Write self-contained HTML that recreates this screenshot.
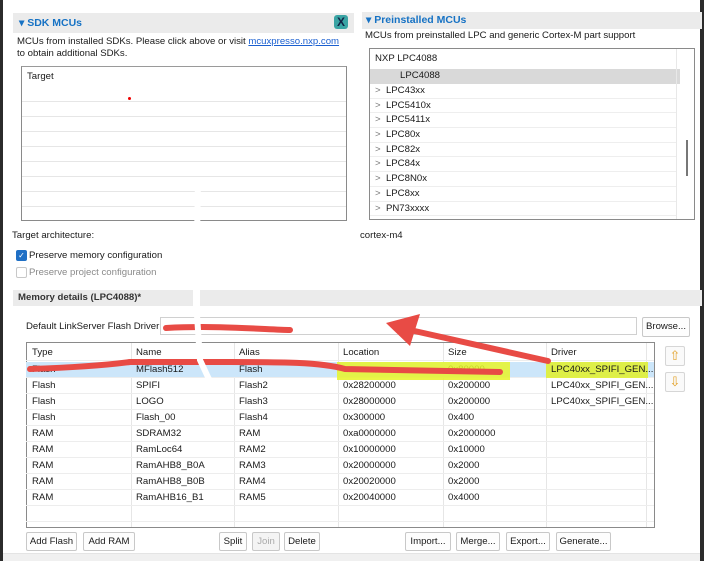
<!DOCTYPE html>
<html><head><style>
*{margin:0;padding:0;box-sizing:border-box}
body{width:704px;height:561px;overflow:hidden;background:#fff;font-family:"Liberation Sans",sans-serif;font-size:9.6px;color:#1a1a1a;position:relative}
.a{position:absolute;white-space:nowrap}
.hdr{position:absolute;background:#ebebeb;color:#1672c4;font-weight:bold;font-size:10.5px}
.row{position:absolute;left:0;right:0;border-bottom:1px solid #e6e6e6}
.btn{position:absolute;top:532px;height:19px;border:1px solid #c8c8c8;border-radius:2px;background:#fdfdfd;font-size:9.6px;text-align:center;line-height:17px}
.tr{position:absolute;left:26px;width:628px;height:16px;border-bottom:1px solid #ededed}
.tr span{position:absolute;top:2px}
</style></head><body>
<div class="a" style="left:0;top:0;width:3px;height:561px;background:#2b2b2b"></div>
<div class="a" style="left:700px;top:0;width:4px;height:561px;background:#2b2b2b"></div>
<div class="a" style="left:3px;top:553px;width:697px;height:8px;background:#f0f0f0;border-top:1px solid #e4e4e4"></div>

<!-- SDK MCUs -->
<div class="hdr" style="left:13px;top:13px;width:341px;height:20px;line-height:20px;padding-left:6px">&#9662; SDK MCUs</div>
<div class="a" style="left:334px;top:15px;width:14px;height:14px;background:#3aa4a4;border-radius:3px;color:#124;font-weight:bold;font-size:12px;text-align:center;line-height:14px">X</div>
<div class="a" style="left:17px;top:36px">MCUs from installed SDKs. Please click above or visit <span style="color:#1a5fd0;text-decoration:underline">mcuxpresso.nxp.com</span></div>
<div class="a" style="left:17px;top:48px">to obtain additional SDKs.</div>
<div class="a" style="left:21px;top:66px;width:326px;height:155px;border:1px solid #8a8a8a;border-top-color:#9a9a9a">
 <div class="a" style="left:5px;top:4px">Target</div>
 <div class="a" style="left:106px;top:30px;width:3px;height:3px;background:#e00;border-radius:50%"></div>
 <div class="row" style="top:0;height:35px"></div>
 <div class="row" style="top:35px;height:15px"></div>
 <div class="row" style="top:50px;height:15px"></div>
 <div class="row" style="top:65px;height:15px"></div>
 <div class="row" style="top:80px;height:15px"></div>
 <div class="row" style="top:95px;height:15px"></div>
 <div class="row" style="top:110px;height:15px"></div>
 <div class="row" style="top:125px;height:15px"></div>
</div>

<!-- Preinstalled -->
<div class="hdr" style="left:362px;top:12px;width:340px;height:17px;line-height:17px;padding-left:4px">&#9662; Preinstalled MCUs</div>
<div class="a" style="left:365px;top:30px">MCUs from preinstalled LPC and generic Cortex-M part support</div>
<div class="a" style="left:369px;top:48px;width:326px;height:172px;border:1px solid #8a8a8a;overflow:hidden">
 <div class="a" style="left:5px;top:4px">NXP LPC4088</div>
 <div class="a" style="left:0;top:20px;width:310px;height:15px;background:#d9d9d9"></div>
 <div class="a" style="left:30px;top:21px">LPC4088</div>
 <div class="a" style="left:306px;top:0;width:1px;height:172px;background:#e8e8e8"></div>
 <div class="a" style="left:316px;top:91px;width:2px;height:36px;background:#777"></div>
 <div style="position:absolute;left:0;top:35px;width:306px">
  <div style="height:14.7px;border-bottom:1px solid #eee;padding-left:5px;line-height:14px"><span style="color:#777">&gt;</span>&nbsp; LPC43xx</div>
  <div style="height:14.7px;border-bottom:1px solid #eee;padding-left:5px;line-height:14px"><span style="color:#777">&gt;</span>&nbsp; LPC5410x</div>
  <div style="height:14.7px;border-bottom:1px solid #eee;padding-left:5px;line-height:14px"><span style="color:#777">&gt;</span>&nbsp; LPC5411x</div>
  <div style="height:14.7px;border-bottom:1px solid #eee;padding-left:5px;line-height:14px"><span style="color:#777">&gt;</span>&nbsp; LPC80x</div>
  <div style="height:14.7px;border-bottom:1px solid #eee;padding-left:5px;line-height:14px"><span style="color:#777">&gt;</span>&nbsp; LPC82x</div>
  <div style="height:14.7px;border-bottom:1px solid #eee;padding-left:5px;line-height:14px"><span style="color:#777">&gt;</span>&nbsp; LPC84x</div>
  <div style="height:14.7px;border-bottom:1px solid #eee;padding-left:5px;line-height:14px"><span style="color:#777">&gt;</span>&nbsp; LPC8N0x</div>
  <div style="height:14.7px;border-bottom:1px solid #eee;padding-left:5px;line-height:14px"><span style="color:#777">&gt;</span>&nbsp; LPC8xx</div>
  <div style="height:14.7px;border-bottom:1px solid #eee;padding-left:5px;line-height:14px"><span style="color:#777">&gt;</span>&nbsp; PN73xxxx</div>
 </div>
</div>

<div class="a" style="left:12px;top:230px">Target architecture:</div>
<div class="a" style="left:360px;top:230px">cortex-m4</div>
<div class="a" style="left:16px;top:250px;width:11px;height:11px;background:#1f6fc5;border-radius:2px;color:#fff;font-size:8px;text-align:center;line-height:11px">&#10003;</div>
<div class="a" style="left:29px;top:250px">Preserve memory configuration</div>
<div class="a" style="left:16px;top:267px;width:11px;height:11px;border:1px solid #c8c8c8;border-radius:2px"></div>
<div class="a" style="left:29px;top:267px;color:#8a8a8a">Preserve project configuration</div>
<div class="a" style="left:13px;top:290px;width:180px;height:16px;background:#ebebeb;font-weight:bold;padding-left:5px;line-height:16px;color:#333">Memory details (LPC4088)*</div>
<div class="a" style="left:200px;top:290px;width:502px;height:16px;background:#ebebeb"></div>

<div class="a" style="left:26px;top:321px">Default LinkServer Flash Driver</div>
<div class="a" style="left:160px;top:317px;width:477px;height:18px;border:1px solid #d0d0d0;background:#fff"></div>
<div class="btn" style="left:642px;top:317px;width:48px;height:20px;line-height:18px">Browse...</div>

<!-- table -->
<div class="a" style="left:26px;top:342px;width:629px;height:186px;border:1px solid #8a8a8a;overflow:hidden">
 <div class="a" style="left:104px;top:0;width:1px;height:186px;background:#e6e6e6"></div>
 <div class="a" style="left:207px;top:0;width:1px;height:186px;background:#e6e6e6"></div>
 <div class="a" style="left:311px;top:0;width:1px;height:186px;background:#e6e6e6"></div>
 <div class="a" style="left:416px;top:0;width:1px;height:186px;background:#e6e6e6"></div>
 <div class="a" style="left:519px;top:0;width:1px;height:186px;background:#e6e6e6"></div>
 <div class="a" style="left:619px;top:0;width:1px;height:186px;background:#e6e6e6"></div>
</div>
<div class="tr" style="top:343px;height:18px"><span style="left:6px;top:4px">Type</span><span style="left:110px;top:4px">Name</span><span style="left:213px;top:4px">Alias</span><span style="left:317px;top:4px">Location</span><span style="left:422px;top:4px">Size</span><span style="left:525px;top:4px">Driver</span></div>
<div class="tr" style="top:362px;background:#cce6fa"><span style="left:6px">Flash</span><span style="left:110px">MFlash512</span><span style="left:213px">Flash</span><span style="left:422px">0x80000</span></div>
<div class="a" style="left:337px;top:362px;width:173px;height:18px;background:rgba(230,245,40,.85)"></div>
<div class="a" style="left:546px;top:362px;width:102px;height:16px;background:rgba(225,240,40,.85)"></div>
<div class="a" style="left:551px;top:364px">LPC40xx_SPIFI_GEN...</div>
<div class="tr" style="top:378px"><span style="left:6px">Flash</span><span style="left:110px">SPIFI</span><span style="left:213px">Flash2</span><span style="left:317px">0x28200000</span><span style="left:422px">0x200000</span><span style="left:525px">LPC40xx_SPIFI_GEN...</span></div>
<div class="tr" style="top:394px"><span style="left:6px">Flash</span><span style="left:110px">LOGO</span><span style="left:213px">Flash3</span><span style="left:317px">0x28000000</span><span style="left:422px">0x200000</span><span style="left:525px">LPC40xx_SPIFI_GEN...</span></div>
<div class="tr" style="top:410px"><span style="left:6px">Flash</span><span style="left:110px">Flash_00</span><span style="left:213px">Flash4</span><span style="left:317px">0x300000</span><span style="left:422px">0x400</span></div>
<div class="tr" style="top:426px"><span style="left:6px">RAM</span><span style="left:110px">SDRAM32</span><span style="left:213px">RAM</span><span style="left:317px">0xa0000000</span><span style="left:422px">0x2000000</span></div>
<div class="tr" style="top:442px"><span style="left:6px">RAM</span><span style="left:110px">RamLoc64</span><span style="left:213px">RAM2</span><span style="left:317px">0x10000000</span><span style="left:422px">0x10000</span></div>
<div class="tr" style="top:458px"><span style="left:6px">RAM</span><span style="left:110px">RamAHB8_B0A</span><span style="left:213px">RAM3</span><span style="left:317px">0x20000000</span><span style="left:422px">0x2000</span></div>
<div class="tr" style="top:474px"><span style="left:6px">RAM</span><span style="left:110px">RamAHB8_B0B</span><span style="left:213px">RAM4</span><span style="left:317px">0x20020000</span><span style="left:422px">0x2000</span></div>
<div class="tr" style="top:490px"><span style="left:6px">RAM</span><span style="left:110px">RamAHB16_B1</span><span style="left:213px">RAM5</span><span style="left:317px">0x20040000</span><span style="left:422px">0x4000</span></div>
<div class="tr" style="top:506px"></div>

<!-- side buttons -->
<div class="a" style="left:665px;top:346px;width:20px;height:20px;border:1px solid #d6d6d6;border-radius:2px;background:#fafafa;color:#e3a22a;font-size:13px;text-align:center;line-height:18px">&#8679;</div>
<div class="a" style="left:665px;top:372px;width:20px;height:20px;border:1px solid #d6d6d6;border-radius:2px;background:#fafafa;color:#e3a22a;font-size:13px;text-align:center;line-height:18px">&#8681;</div>

<div class="btn" style="left:26px;width:51px">Add Flash</div>
<div class="btn" style="left:83px;width:52px">Add RAM</div>
<div class="btn" style="left:219px;width:28px">Split</div>
<div class="btn" style="left:252px;width:28px;color:#aaa;background:#f4f4f4">Join</div>
<div class="btn" style="left:284px;width:36px">Delete</div>
<div class="btn" style="left:405px;width:46px">Import...</div>
<div class="btn" style="left:456px;width:44px">Merge...</div>
<div class="btn" style="left:506px;width:44px">Export...</div>
<div class="btn" style="left:556px;width:55px">Generate...</div>

<svg class="a" style="left:0;top:0" width="704" height="561">
 <g fill="none" stroke="#e84b45" stroke-linecap="round" stroke-width="6">
  <path d="M166 328 C220 325 270 330 290 330"/>
  <path d="M30 369 C60 368 100 366 130 362 L230 362 C280 362 320 362 345 369 L500 372"/>
  <path d="M548 361 L410 330"/>
 </g>
 <path d="M386 323 L420 314 L410 346 Z" fill="#e84b45"/>
 <path d="M198 180 L196 300 L200 360 L214 390" stroke="#fff" stroke-width="6" fill="none"/>
</svg>
</body></html>
